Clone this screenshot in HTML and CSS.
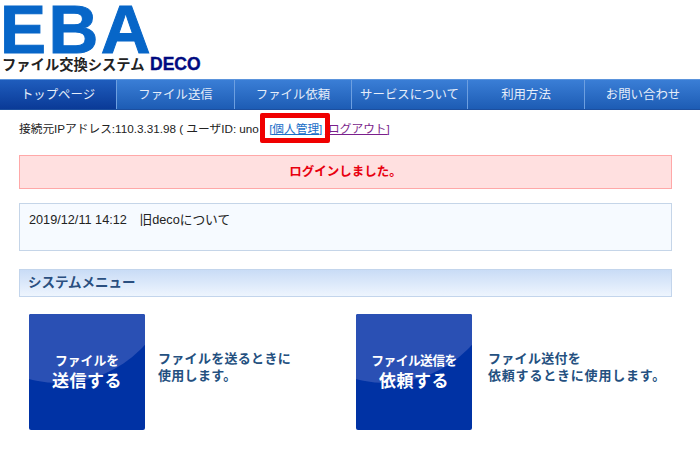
FILE: index.html
```html
<!DOCTYPE html>
<html lang="ja">
<head>
<meta charset="utf-8">
<title>EBA ファイル交換システム DECO</title>
<link rel="stylesheet" href="styles.css">
</head>
<body>
<header class="logo">
  <div class="logo-main">EBA</div>
  <div class="logo-sub"><span class="logo-jp">ファイル交換システム</span><span class="logo-deco">DECO</span></div>
</header>
<nav class="nav">
  <a class="nav-item is-active">トップページ</a>
  <a class="nav-item">ファイル送信</a>
  <a class="nav-item">ファイル依頼</a>
  <a class="nav-item">サービスについて</a>
  <a class="nav-item">利用方法</a>
  <a class="nav-item">お問い合わせ</a>
</nav>
<main class="content">
  <p class="status">接続元IPアドレス:110.3.31.98 ( ユーザID: uno <span class="links"><a class="link">[個人管理]</a><a class="link visited">[ログアウト]</a><span class="mark"></span></span></p>
  <div class="alert">ログインしました。</div>
  <div class="notice">2019/12/11 14:12　旧decoについて</div>
  <h2 class="section">システムメニュー</h2>
  <div class="menu">
    <div class="menu-item first">
      <a class="tile"><span class="tile-small">ファイルを</span><span class="tile-big">送信する</span></a>
      <p class="menu-text">ファイルを送るときに<br>使用します。</p>
    </div>
    <div class="menu-item second">
      <a class="tile"><span class="tile-small narrow">ファイル送信を</span><span class="tile-big">依頼する</span></a>
      <p class="menu-text">ファイル送付を<br><span class="wide">依頼するときに使用します。</span></p>
    </div>
  </div>
</main>
</body>
</html>
```
FILE: styles.css
```css
* { box-sizing: border-box; }
html, body { margin: 0; padding: 0; }
body {
  width: 700px;
  height: 449px;
  overflow: hidden;
  background: #fff;
  font-family: "Liberation Sans", "Noto Sans CJK JP", sans-serif;
  color: #222;
}
.logo { height: 79px; padding: 0 0 0 2px; }
.logo-main {
  height: 56px;
  padding-top: 4px;
  margin-left: -2px;
  font-size: 69px;
  line-height: 52px;
  font-weight: 700;
  color: #0766c8;
  letter-spacing: 2.5px;
  -webkit-text-stroke: 1px #0766c8;
}
.logo-sub { display: flex; align-items: baseline; height: 16px; line-height: 16px; }
.logo-jp { font-size: 14.3px; font-weight: 700; color: #222; width: 148px; white-space: nowrap; }
.logo-deco { font-size: 17.5px; font-weight: 700; color: #000a80; -webkit-text-stroke: 0.4px #000a80; }
.nav {
  display: flex;
  height: 31px;
  background: linear-gradient(#3a7ed6, #1d5cb4);
  border-top: 1px solid #5b94dc;
  border-bottom: 1px solid #1c4f9f;
}
.nav-item {
  flex: 0 0 117px;
  display: flex;
  align-items: center;
  justify-content: center;
  padding-bottom: 2px;
  font-size: 12.4px;
  color: #e6eefa;
  border-right: 1px solid #6d9fe0;
}
.nav-item:nth-child(2) { flex-basis: 118px; }
.nav-item:nth-child(4) { flex-basis: 116px; }
.nav-item:last-child { border-right: 0; flex-basis: 116px; }
.is-active { background: linear-gradient(#1f5dbd, #0a3a97); }
.content { padding: 0 28px 0 19px; }
.status { margin: 0; height: 45px; padding-top: 11px; font-size: 11.7px; line-height: 16px; white-space: nowrap; }
.links { position: relative; margin-left: 7px; }
.link { color: #1a6ec8; text-decoration: underline; }
.visited { color: #7b1f8c; margin-left: 2.5px; }
.mark {
  position: absolute;
  left: -9px;
  top: -9px;
  width: 70px;
  height: 30px;
  border: 5px solid #f00000;
  border-radius: 2px;
}
.alert {
  height: 34px;
  background: #ffe0e0;
  border: 1px solid #ffa8a8;
  color: #e8000f;
  font-size: 12.5px;
  font-weight: 700;
  line-height: 33px;
  text-align: center;
}
.notice {
  margin-top: 14px;
  height: 48px;
  background: #f6faff;
  border: 1px solid #c5d5e8;
  padding: 9px 9px;
  font-size: 12.7px;
  line-height: 15px;
}
.section {
  margin: 18px 0 0;
  height: 28px;
  background: linear-gradient(#c9dcf6, #eef5fe);
  border: 1px solid #c3d5ec;
  padding-left: 8px;
  font-size: 13.5px;
  line-height: 26px;
  color: #2a4f80;
}
.menu { display: flex; padding: 17px 0 0 10px; }
.menu-item { display: flex; flex: none; align-items: flex-start; }
.first { width: 327px; }
.second { width: 316px; }
.tile {
  position: relative;
  overflow: hidden;
  flex: 0 0 116px;
  height: 116px;
  padding-bottom: 3px;
  background: #0032a4;
  border-radius: 2px;
  display: flex;
  flex-direction: column;
  align-items: center;
  justify-content: center;
  color: #fff;
  font-weight: 700;
}
.tile::before {
  content: "";
  position: absolute;
  left: -86px;
  top: -163px;
  width: 232px;
  height: 232px;
  border-radius: 50%;
  background: #2a50b4;
}
.tile-small { position: relative; font-size: 12.8px; line-height: 21px; }
.tile-small.narrow { letter-spacing: -0.6px; }
.tile-big { position: relative; font-size: 17px; line-height: 21px; letter-spacing: 0.5px; }
.menu-text {
  margin: 0 0 0 13px;
  padding-top: 36px;
  font-size: 13px;
  line-height: 17px;
  font-weight: 700;
  color: #24507f;
  letter-spacing: 0.3px;
  white-space: nowrap;
}
.second .menu-text { margin-left: 16px; }
.wide { letter-spacing: 0.8px; }
```
